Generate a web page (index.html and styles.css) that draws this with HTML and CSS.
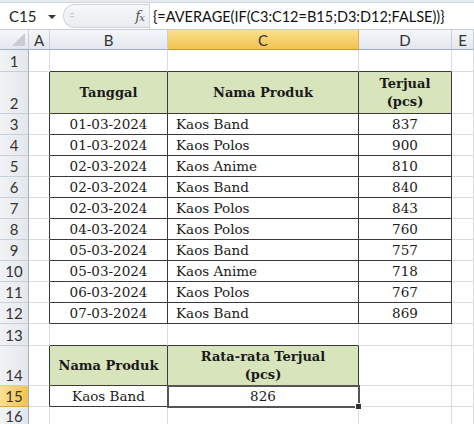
FILE: index.html
```html
<!DOCTYPE html>
<html>
<head>
<meta charset="utf-8">
<link rel="stylesheet" href="styles.css">
</head>
<body>
<div class="app">
  <div class="topstrip"></div>
  <div class="fbar">
    <div class="namebox"><span>C15</span><span class="drop"></span></div>
    <div class="pill">
      <span class="grip"></span>
      <span class="fx"><i>f</i><span class="xs">x</span></span>
    </div>
    <div class="formula">{=AVERAGE(IF(C3:C12=B15;D3:D12;FALSE))}</div>
  </div>
  <div class="sheet">
    <div class="ch corner"><span class="tri"></span></div>
    <div class="ch">A</div><div class="ch">B</div><div class="ch sel">C</div><div class="ch">D</div><div class="ch">E</div>

    <div class="rh">1</div><div class="c edgeR0"></div><div class="c topB"></div><div class="c topB"></div><div class="c topB"></div><div class="c"></div>

    <div class="rh">2</div><div class="c edgeR"></div><div class="c t hd">Tanggal</div><div class="c t hd">Nama Produk</div><div class="c t hd">Terjual<br>(pcs)</div><div class="c"></div>

    <div class="rh">3</div><div class="c edgeR"></div><div class="c t ctr">01-03-2024</div><div class="c t lft">Kaos Band</div><div class="c t ctr">837</div><div class="c"></div>
    <div class="rh">4</div><div class="c edgeR"></div><div class="c t ctr">01-03-2024</div><div class="c t lft">Kaos Polos</div><div class="c t ctr">900</div><div class="c"></div>
    <div class="rh">5</div><div class="c edgeR"></div><div class="c t ctr">02-03-2024</div><div class="c t lft">Kaos Anime</div><div class="c t ctr">810</div><div class="c"></div>
    <div class="rh">6</div><div class="c edgeR"></div><div class="c t ctr">02-03-2024</div><div class="c t lft">Kaos Band</div><div class="c t ctr">840</div><div class="c"></div>
    <div class="rh">7</div><div class="c edgeR"></div><div class="c t ctr">02-03-2024</div><div class="c t lft">Kaos Polos</div><div class="c t ctr">843</div><div class="c"></div>
    <div class="rh">8</div><div class="c edgeR"></div><div class="c t ctr">04-03-2024</div><div class="c t lft">Kaos Polos</div><div class="c t ctr">760</div><div class="c"></div>
    <div class="rh">9</div><div class="c edgeR"></div><div class="c t ctr">05-03-2024</div><div class="c t lft">Kaos Band</div><div class="c t ctr">757</div><div class="c"></div>
    <div class="rh">10</div><div class="c edgeR"></div><div class="c t ctr">05-03-2024</div><div class="c t lft">Kaos Anime</div><div class="c t ctr">718</div><div class="c"></div>
    <div class="rh">11</div><div class="c edgeR"></div><div class="c t ctr">06-03-2024</div><div class="c t lft">Kaos Polos</div><div class="c t ctr">767</div><div class="c"></div>
    <div class="rh">12</div><div class="c edgeR"></div><div class="c t ctr">07-03-2024</div><div class="c t lft">Kaos Band</div><div class="c t ctr">869</div><div class="c"></div>

    <div class="rh">13</div><div class="c"></div><div class="c topB"></div><div class="c topB"></div><div class="c"></div><div class="c"></div>

    <div class="rh">14</div><div class="c edgeR"></div><div class="c t hd">Nama Produk</div><div class="c t hd">Rata-rata Terjual<br>(pcs)</div><div class="c"></div><div class="c"></div>

    <div class="rh sel">15</div><div class="c edgeR"></div><div class="c t ctr">Kaos Band</div><div class="c t ctr active">826</div><div class="c"></div><div class="c"></div>

    <div class="rh last">16</div><div class="c"></div><div class="c"></div><div class="c"></div><div class="c"></div><div class="c"></div>
  </div>
</div>
</body>
</html>
```
FILE: styles.css
```css
html, body { margin: 0; padding: 0; background: #ffffff; }
.app { width: 474px; height: 424px; overflow: hidden; font-family: "Lato", "Liberation Sans", sans-serif; }

.topstrip { height: 3px; background: #e6e9ee; border-bottom: 1px solid #d3d7dd; box-sizing: border-box; }

.fbar { height: 27px; display: flex; align-items: center; background: #ffffff; border-bottom: 1px solid #c6cbd2; box-sizing: border-box; }
.namebox { width: 62px; height: 26px; display: flex; align-items: center; justify-content: space-between; padding: 0 6px 0 9px; box-sizing: border-box; font-size: 15px; color: #222; }
.drop { width: 0; height: 0; border-left: 4px solid transparent; border-right: 4px solid transparent; border-top: 4px solid #333; margin-top: 1px; }
.pill { width: 86px; height: 24px; margin-left: 1px; box-sizing: border-box; border: 1px solid #cfd3d9; border-right: none; border-radius: 12px 0 0 12px; background: linear-gradient(#f7f8fa, #e9ecf0); display: flex; align-items: center; justify-content: space-between; padding: 0 4px 0 6px; }
.grip { width: 4px; height: 2px; border-top: 1px solid #c2c6cc; border-bottom: 1px solid #c2c6cc; margin-top: -3px; }
.fx { font-family: "DejaVu Serif", serif; font-size: 14px; color: #555; display: flex; align-items: baseline; }
.fx i { font-style: italic; }
.xs { font-size: 10px; font-style: italic; margin-left: -1px; }
.formula { flex: 1; height: 26px; border-left: 1px solid #d3d7dd; display: flex; align-items: center; padding-left: 3px; font-size: 14.5px; color: #111; white-space: nowrap; }

.sheet { display: grid; grid-template-columns: 29px 21px 118px 191px 93px 1fr; grid-template-rows: 20px 22px 42px repeat(10, 21px) 22px 40px 21px 21px; }

.ch { background: linear-gradient(#f5f7fa, #e3e7ed); border-right: 1px solid #c9cfd8; border-bottom: 1px solid #9fb0c4; box-sizing: border-box; font-size: 15px; color: #333; display: flex; align-items: center; justify-content: center; }
.ch.sel { background: linear-gradient(#fbe08f, #f3c34e); border-right-color: #e2b24a; border-bottom-color: #c4953a; }
.corner { position: relative; justify-content: flex-end; align-items: flex-end; }
.tri { width: 0; height: 0; border-left: 13px solid transparent; border-bottom: 13px solid #c8ccd2; margin: 0 3px 3px 0; }

.rh { background: linear-gradient(90deg, #f1f3f6, #e4e7ec); border-right: 1px solid #9fb0c4; border-bottom: 1px solid #c9cfd8; box-sizing: border-box; font-size: 15px; color: #333; display: flex; align-items: flex-end; justify-content: center; line-height: 19px; }
.rh.sel { background: linear-gradient(90deg, #fbe08f, #f3c34e); border-bottom-color: #d9a84a; }
.rh.last { align-items: flex-start; line-height: 19px; }

.c { border-right: 1px solid #dadcdf; border-bottom: 1px solid #dadcdf; box-sizing: border-box; font-family: "DejaVu Serif", serif; font-size: 13.5px; color: #1a1a1a; display: flex; align-items: center; white-space: nowrap; }
.c.edgeR { border-right-color: #3a3a3a; }
.c.topB { border-bottom-color: #3a3a3a; }
.c.t { border-right-color: #3a3a3a; border-bottom-color: #3a3a3a; }
.ctr { justify-content: center; }
.lft { padding-left: 8px; }
.hd { background: #d8e4bc; font-weight: bold; font-size: 13px; justify-content: center; text-align: center; line-height: 18px; }

.active { position: relative; }
.active::after { content: ""; position: absolute; left: -1px; top: -1px; right: -2px; bottom: -2px; border: 2px solid #555; box-sizing: border-box; }
.active::before { content: ""; position: absolute; right: -4px; bottom: -4px; width: 5px; height: 5px; background: #333; border: 1px solid #fff; z-index: 2; }
```
